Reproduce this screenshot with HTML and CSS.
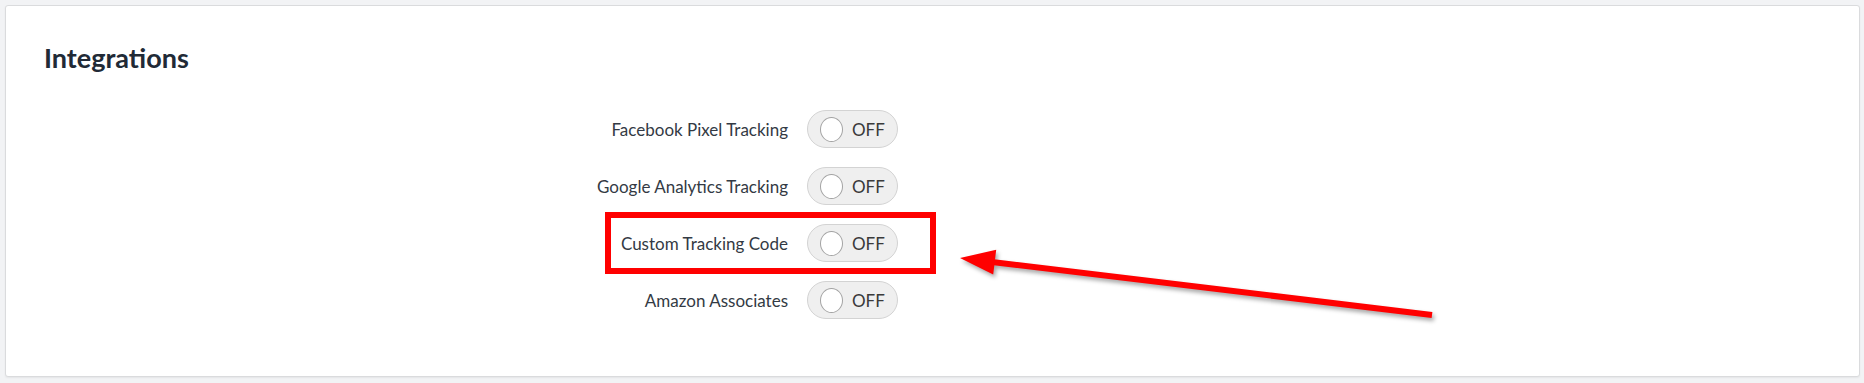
FILE: index.html
```html
<!DOCTYPE html>
<html lang="en">
<head>
    <meta charset="UTF-8">
    <meta name="viewport" content="width=device-width, initial-scale=1.0">
    <title>Integrations</title>
    <link rel="stylesheet" href="styles.css">
</head>
<body>

    <div class="card">
        <h2 class="card-title">Integrations</h2>

        <!-- Switches -->
        <div class="settings">
            <label class="setting-label">Facebook Pixel Tracking</label>
            <span class="switch"><span class="knob"></span><span class="switch-text">OFF</span></span>

            <label class="setting-label">Google Analytics Tracking</label>
            <span class="switch"><span class="knob"></span><span class="switch-text">OFF</span></span>

            <label class="setting-label">Custom Tracking Code</label>
            <span class="switch"><span class="knob"></span><span class="switch-text">OFF</span></span>

            <label class="setting-label">Amazon Associates</label>
            <span class="switch"><span class="knob"></span><span class="switch-text">OFF</span></span>
        </div>

        <!-- Annotation -->
        <div class="callout-box"></div>
        <svg class="callout-arrow" width="510" height="90" viewBox="0 0 510 90">
            <line x1="50" y1="19.7" x2="492" y2="73" stroke="#ff0000" stroke-width="6"/>
            <polygon points="20,16 56.2,7.8 53.2,32.6" fill="#ff0000"/>
        </svg>
    </div>

</body>
</html>
```

FILE: styles.css
```css
body {
    margin: 0;
    background-color: #f2f3f5;
    font-family: Lato, "Liberation Sans", sans-serif;
    color: #333a44;
}
.card {
    position: relative;
    margin: 5px 4px 6px 5px;
    padding: 36px 38px 57px 38px;
    background-color: #fff;
    border: 1px solid #dadbdd;
    border-radius: 3px;
    box-shadow: 0 1px 2px rgba(0, 0, 0, 0.06);
}
.card-title {
    margin: 0 0 36px 0;
    font-size: 27px;
    line-height: 32px;
    font-weight: bold;
    color: #212a36;
}
.settings {
    display: grid;
    grid-template-columns: 744px max-content;
    column-gap: 19px;
    row-gap: 19px;
    align-items: center;
}
.setting-label {
    justify-self: end;
    font-size: 17px;
    padding-top: 1px;
}
.switch {
    display: flex;
    align-items: center;
    box-sizing: border-box;
    width: 91px;
    height: 38px;
    padding-left: 12px;
    background-color: #efefef;
    border: 1px solid #d3d3d3;
    border-radius: 19px;
}
.knob {
    box-sizing: border-box;
    width: 23px;
    height: 25px;
    background-color: #fff;
    border: 1.5px solid #a3a3a3;
    border-radius: 50%;
}
.switch-text {
    margin-left: 9px;
    font-size: 17px;
    color: #3a3a3a;
}
.callout-box {
    position: absolute;
    left: 599px;
    top: 206px;
    width: 331px;
    height: 62px;
    box-sizing: border-box;
    border: 6px solid #ff0000;
}
.callout-arrow {
    position: absolute;
    left: 934px;
    top: 236px;
    filter: drop-shadow(2px 3px 2px rgba(0, 0, 0, 0.35));
}
```
